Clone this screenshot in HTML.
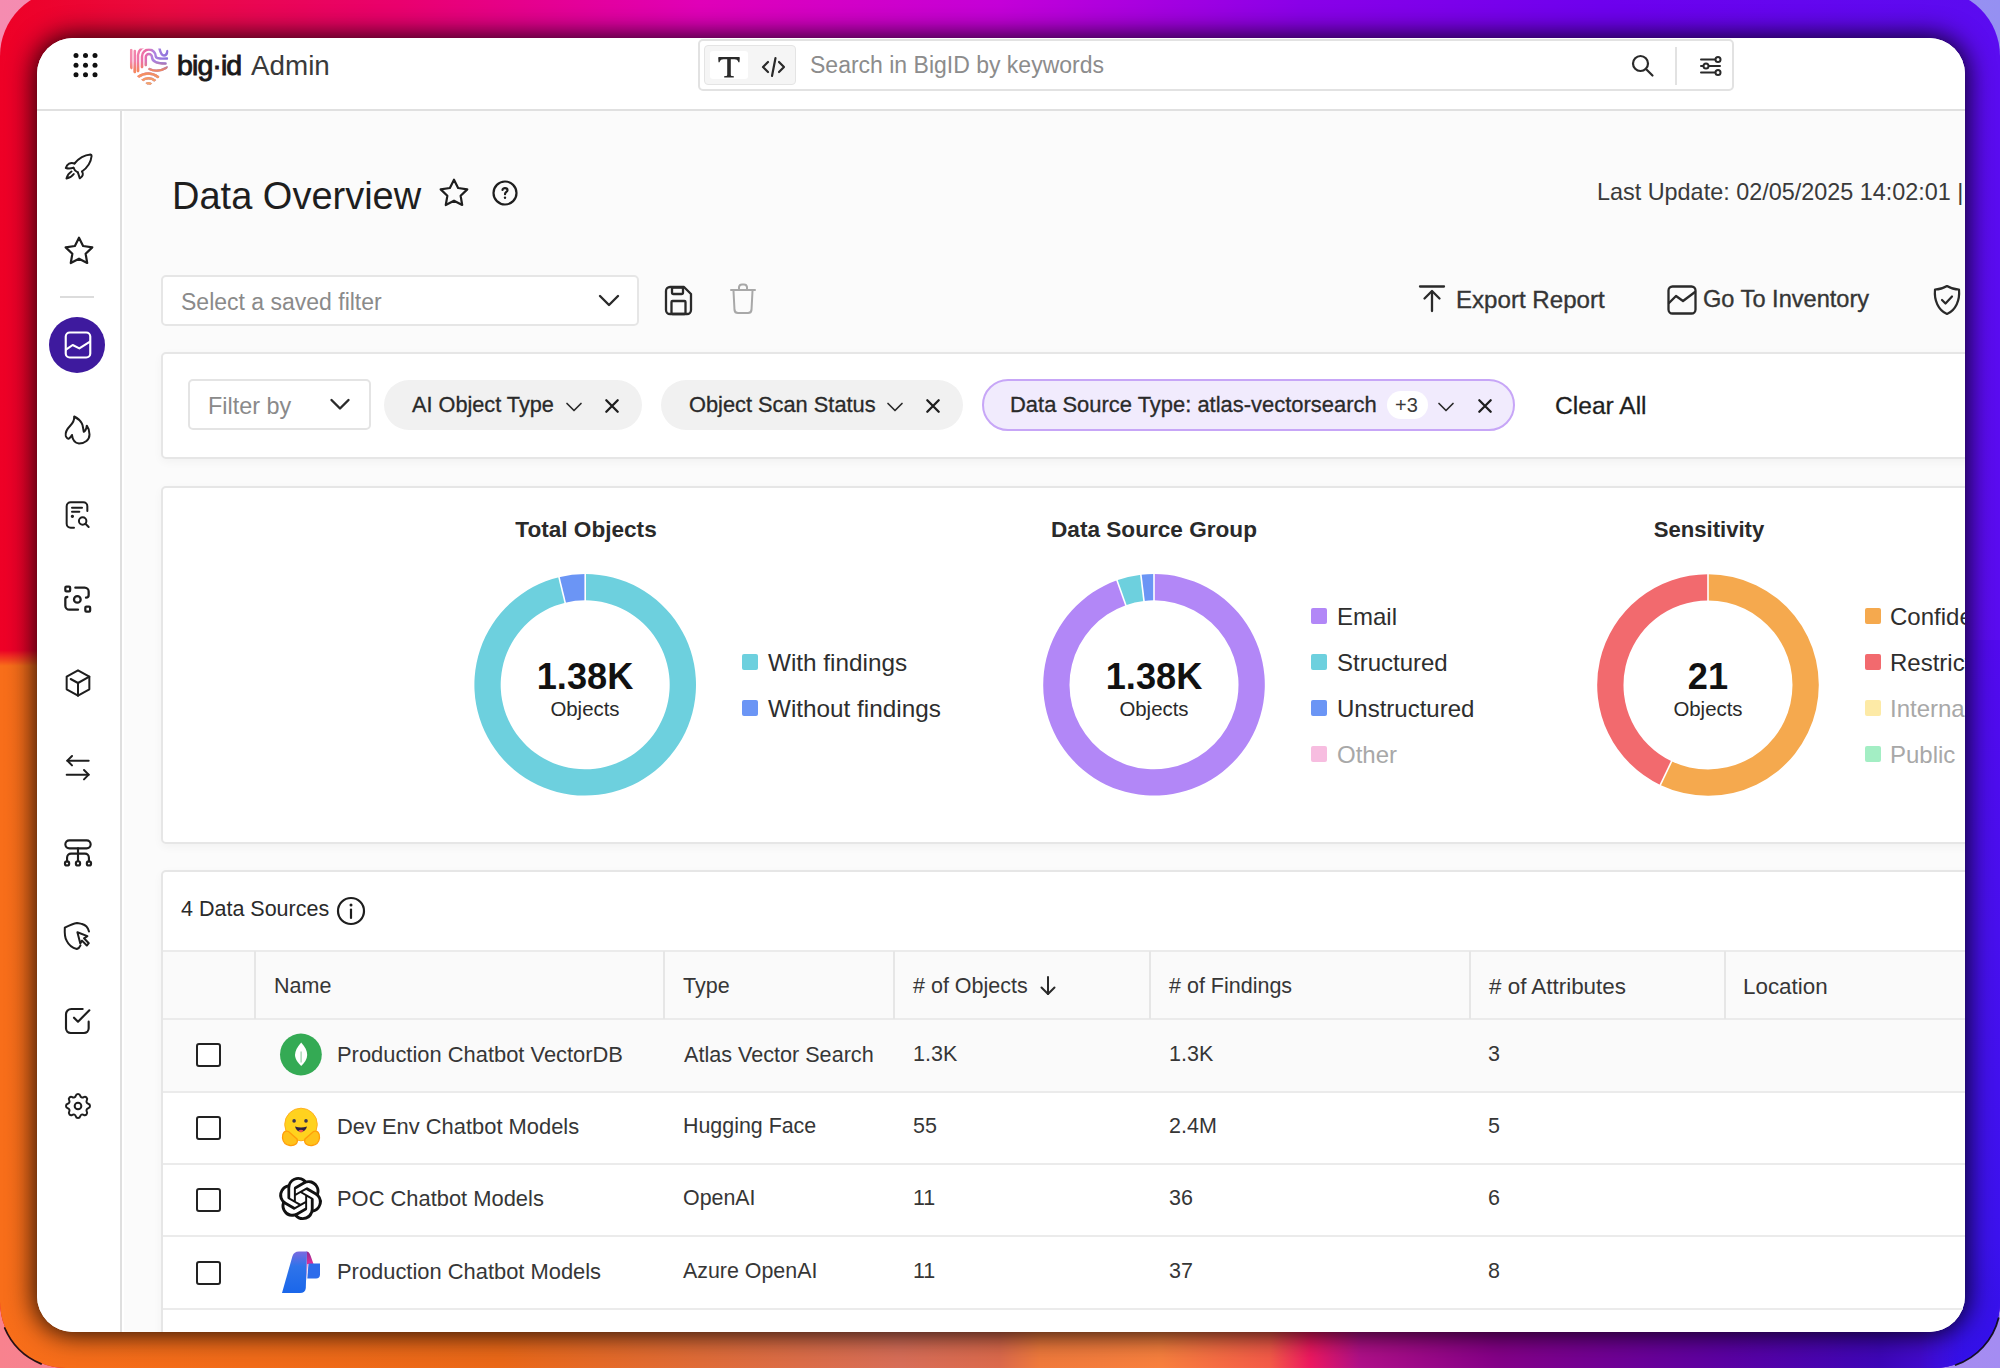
<!DOCTYPE html>
<html><head><meta charset="utf-8">
<style>
*{box-sizing:border-box;margin:0;padding:0}
html,body{width:2000px;height:1368px;overflow:hidden;font-family:"Liberation Sans",sans-serif;color:#222}
body{position:relative;background:linear-gradient(90deg,#f58cb0,#9590f2) top/100% 50% no-repeat,linear-gradient(90deg,#f8828e,#a48cf2) bottom/100% 50% no-repeat}
#frame{position:absolute;left:0;top:-10px;width:2000px;height:1378px;border-radius:66px;overflow:hidden}
#ftop{position:absolute;inset:0;background:linear-gradient(90deg,#ee0026 0%,#ea0a40 8%,#ea006e 20%,#e000b8 35%,#c400d8 50%,#8a00e8 65%,#6e00ee 80%,#5a0cf0 100%)}
#fbot{position:absolute;inset:0;background:linear-gradient(90deg,#f86e1a 0%,#ea6818 25%,#e06c38 35%,#d86e58 45%,#dc6a4c 50%,#f07a3c 52%,#f8803e 58%,#f45a48 63.5%,#ee1860 65.5%,#b01088 68%,#840088 75%,#6000a0 85%,#3e06b8 94%,#4812ee 100%);-webkit-mask-image:linear-gradient(180deg,transparent 0,transparent 660px,#000 676px)}
#fright{position:absolute;left:1920px;top:650px;width:80px;height:768px;background:linear-gradient(180deg,#520aee 0%,#4810ee 38%,#3c12ee 78%,#3010e6 100%);-webkit-mask-image:linear-gradient(90deg,transparent 0,#000 45px)}
#win{position:absolute;left:37px;top:38px;width:1928px;height:1294px;border-radius:36px;background:#fbfbfb;overflow:hidden;box-shadow:0 0 26px 3px rgba(0,0,0,.85)}
#pg{position:absolute;left:-37px;top:-38px;width:2000px;height:1368px}
.a{position:absolute}
.t{position:absolute;white-space:nowrap;line-height:1}
svg.i{position:absolute;overflow:visible}
.card{position:absolute;background:#fff;border:2px solid #e6e6e6;border-radius:5px;box-shadow:0 3px 10px rgba(0,0,0,.04)}
</style></head><body>
<div id="frame"><div id="ftop"></div><div id="fbot"></div><div id="fright"></div></div>
<svg class="i" style="left:0;top:0" width="2000" height="1368" viewBox="0 0 2000 1368"><g fill="none" stroke="#000" stroke-width="1.8" stroke-linecap="round" opacity=".85"><path d="M4.7 1328.0 A66.6 66.6 0 0 0 41.1 1363.8"/><path d="M1998.6 1318.1 A66.6 66.6 0 0 1 1955.7 1365.0"/></g></svg>
<div id="win"><div id="pg">
<!-- HEADER -->
<div class="a" style="left:37px;top:38px;width:1928px;height:73px;background:#fff;border-bottom:2px solid #e0e0e0"></div>
<!-- grid dots -->
<svg class="i" style="left:70px;top:50px" width="32" height="32" viewBox="0 0 32 32">
<g fill="#111"><circle cx="6" cy="5.6" r="2.5"/><circle cx="15.5" cy="5.6" r="2.5"/><circle cx="25" cy="5.6" r="2.5"/><circle cx="6" cy="15.2" r="2.5"/><circle cx="15.5" cy="15.2" r="2.5"/><circle cx="25" cy="15.2" r="2.5"/><circle cx="6" cy="24.8" r="2.5"/><circle cx="15.5" cy="24.8" r="2.5"/><circle cx="25" cy="24.8" r="2.5"/></g></svg>
<!-- logo -->
<svg class="i" style="left:128px;top:46px" width="41" height="41" viewBox="0 0 41 41">
<defs>
<clipPath id="lc"><path d="M1.2 5 Q1 2.5 4 2.5 L37 2.5 Q40.5 2.5 40.5 6 L40 20 Q39 25 35 28.5 L21 40 L7 28.5 Q2 24 1.5 19 Z"/></clipPath>
<linearGradient id="lgA" gradientUnits="userSpaceOnUse" x1="2" y1="6" x2="40" y2="16"><stop offset="0" stop-color="#f590ae"/><stop offset=".4" stop-color="#ec6aa6"/><stop offset=".58" stop-color="#b083e0"/><stop offset="1" stop-color="#8670dc"/></linearGradient>
<linearGradient id="lgO" gradientUnits="userSpaceOnUse" x1="0" y1="15" x2="0" y2="38"><stop offset="0" stop-color="#f5885a" stop-opacity="0"/><stop offset=".42" stop-color="#f5885a" stop-opacity=".95"/><stop offset="1" stop-color="#f7a868"/></linearGradient>
<g id="rid">
<path d="M17.8 19 V11 A3.1 3.1 0 0 1 24 11 C24 14.5 27 17.5 37.5 17.5"/>
<path d="M14 21 V10.5 A6.9 6.9 0 0 1 27.8 10.5 C28 12 30 13 39 12.5"/>
<path d="M10 25 V9 A10 10 0 0 1 20 0"/>
<path d="M31.5 2.5 C32.5 7 34 9.5 36 9.5 C38 9.5 39 8 39.5 5"/>
<path d="M21.5 23 C26 25.5 33 25 39 21.5"/>
<path d="M3.2 22 V4"/><path d="M6.8 26 V5"/>
<path d="M10 31 Q20.5 24 30 31"/><path d="M13.5 35 Q20.5 29.5 27.5 35"/><path d="M17 39 Q20.5 35.5 24 39"/></g>
</defs>
<g clip-path="url(#lc)" fill="none" stroke-width="2.5" stroke-linecap="round">
<use href="#rid" stroke="url(#lgA)"/><use href="#rid" stroke="url(#lgO)"/>
</g></svg>
<div class="t" style="left:177px;top:51px;font-size:28.5px;font-weight:400;letter-spacing:-0.9px;-webkit-text-stroke:0.9px #1a1a1a;color:#1a1a1a">big·id</div>
<div class="t" style="left:251px;top:52px;font-size:27.8px;color:#3a3a3a">Admin</div>
<!-- search -->
<div class="a" style="left:698px;top:39px;width:1036px;height:52px;background:#fff;border:2px solid #e2e2e2;border-radius:5px"></div>
<div class="a" style="left:704px;top:45px;width:92px;height:40px;background:#f5f5f5;border:1.5px solid #e4e4e4;border-radius:4px"></div>
<div class="a" style="left:710px;top:51px;width:38px;height:28px;background:#fff;border-radius:3px"></div>
<svg class="i" style="left:716px;top:54px" width="26" height="26" viewBox="0 0 26 26"><g fill="#2a2a2a"><path d="M3 3 H23 C23.5 3 23.8 3.3 23.8 3.8 L23.5 8 C23.4 8.6 22.6 8.6 22.4 8 C21.6 6 20.5 5.3 18.5 5.3 H14.8 V20.8 C14.8 21.6 15.3 22 16.2 22.1 L17.5 22.3 C18.2 22.4 18.2 23.4 17.5 23.4 H8.5 C7.8 23.4 7.8 22.4 8.5 22.3 L9.8 22.1 C10.7 22 11.2 21.6 11.2 20.8 V5.3 H7.5 C5.5 5.3 4.4 6 3.6 8 C3.4 8.6 2.6 8.6 2.5 8 L2.2 3.8 C2.2 3.3 2.5 3 3 3Z"/></g></svg>
<svg class="i" style="left:760px;top:54px" width="28" height="26" viewBox="0 0 28 26"><g fill="none" stroke="#2a2a2a" stroke-width="2.2" stroke-linecap="round" stroke-linejoin="round"><path d="M8 8 L3 13 L8 18"/><path d="M19 8 L24 13 L19 18"/><path d="M15.5 4 L12 22"/></g></svg>
<div class="t" style="left:810px;top:54px;font-size:23px;color:#8c8c8c">Search in BigID by keywords</div>
<svg class="i" style="left:1630px;top:53px" width="26" height="26" viewBox="0 0 26 26"><g fill="none" stroke="#2a2a2a" stroke-width="2.2" stroke-linecap="round"><circle cx="10.5" cy="10.5" r="7.5"/><path d="M16 16 L22.5 22.5"/></g></svg>
<div class="a" style="left:1675px;top:47px;width:2px;height:38px;background:#e2e2e2"></div>
<svg class="i" style="left:1698px;top:55px" width="26" height="26" viewBox="0 0 26 26"><g fill="none" stroke="#2a2a2a" stroke-width="2" stroke-linecap="round"><path d="M3 4.5 H17"/><circle cx="20" cy="4.5" r="2.5"/><path d="M3 11 H5"/><circle cx="8" cy="11" r="2.5"/><path d="M11 11 H22"/><path d="M3 17.5 H17"/><circle cx="20" cy="17.5" r="2.5"/></g></svg>
<!-- SIDEBAR -->
<div class="a" style="left:37px;top:111px;width:87px;height:1222px;background:#fff"></div><div class="a" style="left:120px;top:111px;width:2px;height:1222px;background:#dfdfdf"></div>
<!-- sidebar icons -->
<svg class="i" style="left:60px;top:150px" width="36" height="36" viewBox="0 0 36 36"><g fill="none" stroke="#1e1e1e" stroke-width="2" stroke-linecap="round" stroke-linejoin="round"><path d="M14.5 13.5 C19 8 24.5 5 30.5 4.5 C31.3 4.6 31.6 5 31.6 6 C31 12 27.5 17.5 22 21.5"/><path d="M14.5 13.5 C10.5 12 7 14 5.8 18 C8.5 18.8 11 18.5 13.5 17.8"/><path d="M22 21.5 C23.5 23.5 23.2 26.5 19.8 28.3 C19 26 18.5 24 17.8 22.3"/><path d="M13.5 17.8 C14 19.5 15.5 21.3 17.8 22.3"/><path d="M11.5 21.5 C9 23 7.3 25.5 6.5 28.5 C9.5 28 12 26.5 13.8 24"/></g></svg>
<svg class="i" style="left:63px;top:235px" width="32" height="32" viewBox="0 0 24 24"><g fill="none" stroke="#1e1e1e" stroke-width="1.65" stroke-linecap="round" stroke-linejoin="round"><path d="M12 17.75l-6.172 3.245l1.179 -6.873l-5 -4.867l6.9 -1l3.086 -6.253l3.086 6.253l6.9 1l-5 4.867l1.179 6.873z"/></g></svg>
<div class="a" style="left:60px;top:296px;width:34px;height:2px;background:#dcdcdc"></div>
<div class="a" style="left:49px;top:317px;width:56px;height:56px;border-radius:50%;background:#3e1a9e"></div>
<svg class="i" style="left:62px;top:329px" width="32" height="32" viewBox="0 0 24 24"><g fill="none" stroke="#fff" stroke-width="1.6" stroke-linecap="round" stroke-linejoin="round"><rect x="2.8" y="2.6" width="18.4" height="18.8" rx="3"/><path d="M3 15.5 L8 12 L13 14.5 L21 9.5"/></g></svg>
<svg class="i" style="left:60px;top:412px" width="36" height="36" viewBox="0 0 36 36"><g fill="none" stroke="#1e1e1e" stroke-width="2" stroke-linecap="round" stroke-linejoin="round"><path d="M14.2 4.5 C14.5 9 13 11 10 14 C6.5 17.5 5 20 5.8 24 C6.5 26 8 27 9 26.5 C10.5 25.5 11.5 24 12 23 C12.5 27.5 15 31 19 31.5 C25 31.5 29.5 28 29.5 22.5 C29.5 19 28.5 16 26.8 13.7 C26.5 16 25.5 19 23.8 19.8 C23 16.5 23 13 21.8 11.3 C20 8 17 6 14.2 4.5Z"/></g></svg>
<svg class="i" style="left:62px;top:499px" width="32" height="32" viewBox="0 0 24 24"><g fill="none" stroke="#1e1e1e" stroke-width="1.5" stroke-linecap="round" stroke-linejoin="round"><path d="M9 21.5H6.5a3 3 0 0 1 -3 -3V5.5a3 3 0 0 1 3 -3H16a3 3 0 0 1 3 3V9"/><path d="M7.5 6.5H15"/><path d="M7.5 9.5H13"/><circle cx="7.8" cy="13" r=".5" fill="#1e1e1e"/><circle cx="15.5" cy="16.5" r="2.8"/><path d="M17.6 18.6L20 21"/></g></svg>
<svg class="i" style="left:62px;top:583px" width="32" height="32" viewBox="0 0 24 24"><g fill="none" stroke="#1e1e1e" stroke-width="1.7" stroke-linecap="round" stroke-linejoin="round"><rect x="2.5" y="2.8" width="3.6" height="3.4" rx=".8"/><rect x="17.5" y="17.8" width="3.6" height="3.6" rx=".8"/><circle cx="11.5" cy="12.3" r="2.5"/><path d="M10 3.5H17a3 3 0 0 1 3 3V9a2 2 0 0 1 -2 2"/><path d="M4 10.5a1.5 1.5 0 0 0 -1.5 1.5V17a3 3 0 0 0 3 3H12"/></g></svg>
<svg class="i" style="left:62px;top:667px" width="32" height="32" viewBox="0 0 24 24"><g fill="none" stroke="#1e1e1e" stroke-width="1.5" stroke-linecap="round" stroke-linejoin="round"><path d="M12 2.5l8.5 4.8v9.4l-8.5 4.8l-8.5 -4.8v-9.4z"/><path d="M12 12l8.5 -4.7"/><path d="M12 12v9.5"/><path d="M12 12l-5.5 -3"/></g></svg>
<svg class="i" style="left:62px;top:752px" width="32" height="32" viewBox="0 0 24 24"><g fill="none" stroke="#1e1e1e" stroke-width="1.5" stroke-linecap="round" stroke-linejoin="round"><path d="M20 6.5H4"/><path d="M7.5 3L4 6.5L7.5 10"/><path d="M3.5 17H20"/><path d="M16.5 13.5L20 17L16.5 20.5"/></g></svg>
<svg class="i" style="left:62px;top:837px" width="32" height="32" viewBox="0 0 24 24"><g fill="none" stroke="#1e1e1e" stroke-width="1.6" stroke-linecap="round" stroke-linejoin="round"><rect x="2.5" y="2.5" width="19" height="6" rx="3"/><path d="M12 8.5V18"/><path d="M3.8 18.5V15.5a3 3 0 0 1 3 -3H17.2a3 3 0 0 1 3 3V18.5"/><circle cx="3.8" cy="19.8" r="1.6"/><circle cx="12" cy="19.8" r="1.6"/><circle cx="20.2" cy="19.8" r="1.6"/></g></svg>
<svg class="i" style="left:60px;top:919px" width="36" height="36" viewBox="0 0 36 36"><g fill="none" stroke="#1e1e1e" stroke-width="2" stroke-linecap="round" stroke-linejoin="round"><path d="M29 12.5 C28 8.5 26 6 22 5 C20 4.5 18.5 4 17 3.9 C13 4.5 9 6.5 4.8 8.7 C4.5 15 5 19 6.6 21.6 C8.5 25.5 12.5 29 16.8 30 C18.5 29.5 19.8 28 20.5 26.3"/><path d="M17.4 13.2 L27.4 17.1 L24 19.3 L28.8 24.2 L26.8 26.5 L22 21.6 L20.3 24.5 Z"/></g></svg>
<svg class="i" style="left:62px;top:1005px" width="32" height="32" viewBox="0 0 24 24"><g fill="none" stroke="#1e1e1e" stroke-width="1.6" stroke-linecap="round" stroke-linejoin="round"><path d="M15.5 3H7a4 4 0 0 0 -4 4V17.5a3.5 3.5 0 0 0 3.5 3.5H16.5a3.5 3.5 0 0 0 3.5 -3.5V12.5"/><path d="M9 9.5L12 12.5L20.5 4"/></g></svg>
<svg class="i" style="left:62px;top:1090px" width="32" height="32" viewBox="0 0 24 24"><g fill="none" stroke="#1e1e1e" stroke-width="1.5" stroke-linecap="round" stroke-linejoin="round"><path d="M10.325 4.317c.426 -1.756 2.924 -1.756 3.35 0a1.724 1.724 0 0 0 2.573 1.066c1.543 -.94 3.31 .826 2.37 2.37a1.724 1.724 0 0 0 1.065 2.572c1.756 .426 1.756 2.924 0 3.35a1.724 1.724 0 0 0 -1.066 2.573c.94 1.543 -.826 3.31 -2.37 2.37a1.724 1.724 0 0 0 -2.572 1.065c-.426 1.756 -2.924 1.756 -3.35 0a1.724 1.724 0 0 0 -2.573 -1.066c-1.543 .94 -3.31 -.826 -2.37 -2.37a1.724 1.724 0 0 0 -1.065 -2.572c-1.756 -.426 -1.756 -2.924 0 -3.35a1.724 1.724 0 0 0 1.066 -2.573c-.94 -1.543 .826 -3.31 2.37 -2.37c1 .608 2.296 .07 2.572 -1.065z"/><circle cx="12" cy="12" r="2.5"/></g></svg>

<!-- TITLE ROW -->
<div class="t" style="left:172px;top:177px;font-size:38px;color:#1e1e1e">Data Overview</div>
<svg class="i" style="left:438px;top:177px" width="32" height="32" viewBox="0 0 24 24"><g fill="none" stroke="#1e1e1e" stroke-width="1.65" stroke-linecap="round" stroke-linejoin="round"><path d="M12 17.75l-6.172 3.245l1.179 -6.873l-5 -4.867l6.9 -1l3.086 -6.253l3.086 6.253l6.9 1l-5 4.867l1.179 6.873z"/></g></svg>
<svg class="i" style="left:491px;top:179px" width="28" height="28" viewBox="0 0 28 28"><g fill="none" stroke="#1e1e1e" stroke-width="2.2" stroke-linecap="round"><circle cx="14" cy="14" r="11.5"/><path d="M11.5 11 C11.5 8.5 16.5 8.5 16.5 11.2 C16.5 13 14 13 14 15.2"/></g><circle cx="14" cy="18.8" r="1.2" fill="#1e1e1e"/></svg>
<div class="t" style="left:1597px;top:181px;font-size:23.4px;color:#3a3a3a">Last Update: 02/05/2025 14:02:01 |</div>

<!-- TOOLBAR -->
<div class="a" style="left:161px;top:275px;width:478px;height:51px;background:#fff;border:2px solid #e6e6e6;border-radius:5px"></div>
<div class="t" style="left:181px;top:291px;font-size:23px;color:#8a8a8a">Select a saved filter</div>
<svg class="i" style="left:597px;top:292px" width="24" height="18" viewBox="0 0 24 18"><path d="M3 4 L12 13 L21 4" fill="none" stroke="#2a2a2a" stroke-width="2.4" stroke-linecap="round" stroke-linejoin="round"/></svg>
<svg class="i" style="left:663px;top:284px" width="32" height="33" viewBox="0 0 32 33"><g fill="none" stroke="#2a2a2a" stroke-width="2.3" stroke-linejoin="round"><path d="M7 3 H21 L28 10 V26 A4 4 0 0 1 24 30 H7 A4 4 0 0 1 3 26 V7 A4 4 0 0 1 7 3z"/><rect x="9" y="3.5" width="11" height="6.5" rx="1.5"/><rect x="8.5" y="17" width="14" height="13" rx="1"/></g></svg>
<svg class="i" style="left:728px;top:282px" width="30" height="34" viewBox="0 0 30 34"><g fill="none" stroke="#a8a8a8" stroke-width="2" stroke-linecap="round" stroke-linejoin="round"><path d="M3 8 H27"/><path d="M11 7 V5 A3 3 0 0 1 14 2.5 H16 A3 3 0 0 1 19 5 V7"/><path d="M5.5 9 L6.5 28 A3.5 3.5 0 0 0 10 31 H20 A3.5 3.5 0 0 0 23.5 28 L24.5 9"/></g></svg>
<svg class="i" style="left:1417px;top:283px" width="30" height="30" viewBox="0 0 30 30"><g fill="none" stroke="#2a2a2a" stroke-width="2.3" stroke-linecap="round" stroke-linejoin="round"><path d="M3 3.5 H27"/><path d="M15 28 V9"/><path d="M7.5 15.5 L15 8 L22.5 15.5"/></g></svg>
<div class="t" style="left:1456px;top:288px;font-size:24.1px;color:#353535;-webkit-text-stroke:0.35px #353535">Export Report</div>
<svg class="i" style="left:1666px;top:284px" width="32" height="32" viewBox="0 0 32 32"><g fill="none" stroke="#2a2a2a" stroke-width="2.3" stroke-linecap="round" stroke-linejoin="round"><rect x="2.5" y="2.5" width="27" height="27" rx="4"/><path d="M3 19 L10 12 L17 17 L29 8"/></g></svg>
<div class="t" style="left:1703px;top:288px;font-size:23.6px;color:#353535;-webkit-text-stroke:0.35px #353535">Go To Inventory</div>
<svg class="i" style="left:1932px;top:284px" width="30" height="32" viewBox="0 0 30 32"><g fill="none" stroke="#2a2a2a" stroke-width="2.2" stroke-linecap="round" stroke-linejoin="round"><path d="M15 2 C19 4.5 23 5.5 27 5.5 C28 16 24 26 15 30 C6 26 2 16 3 5.5 C7 5.5 11 4.5 15 2z"/><path d="M10 16 L13.5 19.5 L20 12.5"/></g></svg>
<!-- FILTER PANEL -->
<div class="card" style="left:161px;top:352px;width:1830px;height:107px"></div>
<div class="a" style="left:188px;top:379px;width:183px;height:51px;background:#fff;border:2px solid #e4e4e4;border-radius:5px"></div>
<div class="t" style="left:208px;top:395px;font-size:23.4px;color:#8a8a8a">Filter by</div>
<svg class="i" style="left:328px;top:396px" width="24" height="18" viewBox="0 0 24 18"><path d="M3.5 4 L12 12.5 L20.5 4" fill="none" stroke="#2a2a2a" stroke-width="2.4" stroke-linecap="round" stroke-linejoin="round"/></svg>

<div class="a" style="left:384px;top:380px;width:258px;height:50px;background:#f1f1f1;border-radius:25px"></div>
<div class="t" style="left:412px;top:394px;font-size:21.7px;color:#2a2a2a;-webkit-text-stroke:0.3px #2a2a2a">AI Object Type</div>
<svg class="i" style="left:565px;top:399.5px" width="18" height="14" viewBox="0 0 18 14"><path d="M2 3.5 L9 10.5 L16 3.5" fill="none" stroke="#2a2a2a" stroke-width="1.7" stroke-linecap="round" stroke-linejoin="round"/></svg>
<svg class="i" style="left:603px;top:397px" width="18" height="18" viewBox="0 0 18 18"><path d="M3.3 3.3 L14.7 14.7 M14.7 3.3 L3.3 14.7" fill="none" stroke="#1e1e1e" stroke-width="2.3" stroke-linecap="round"/></svg>

<div class="a" style="left:661px;top:380px;width:302px;height:50px;background:#f1f1f1;border-radius:25px"></div>
<div class="t" style="left:689px;top:394px;font-size:21.8px;color:#2a2a2a;-webkit-text-stroke:0.3px #2a2a2a">Object Scan Status</div>
<svg class="i" style="left:886px;top:399.5px" width="18" height="14" viewBox="0 0 18 14"><path d="M2 3.5 L9 10.5 L16 3.5" fill="none" stroke="#2a2a2a" stroke-width="1.7" stroke-linecap="round" stroke-linejoin="round"/></svg>
<svg class="i" style="left:924px;top:397px" width="18" height="18" viewBox="0 0 18 18"><path d="M3.3 3.3 L14.7 14.7 M14.7 3.3 L3.3 14.7" fill="none" stroke="#1e1e1e" stroke-width="2.3" stroke-linecap="round"/></svg>

<div class="a" style="left:982px;top:379px;width:533px;height:52px;background:#f1ebfd;border:2px solid #c7a6f7;border-radius:26px"></div>
<div class="t" style="left:1010px;top:394px;font-size:21.95px;color:#2a2a2a;-webkit-text-stroke:0.3px #2a2a2a">Data Source Type: atlas-vectorsearch</div>
<div class="a" style="left:1387px;top:391px;width:41px;height:28px;background:#fff;border-radius:14px"></div>
<div class="t" style="left:1395px;top:395px;font-size:20px;color:#3a3a3a">+3</div>
<svg class="i" style="left:1437px;top:399.5px" width="18" height="14" viewBox="0 0 18 14"><path d="M2 3.5 L9 10.5 L16 3.5" fill="none" stroke="#2a2a2a" stroke-width="1.7" stroke-linecap="round" stroke-linejoin="round"/></svg>
<svg class="i" style="left:1476px;top:397px" width="18" height="18" viewBox="0 0 18 18"><path d="M3.3 3.3 L14.7 14.7 M14.7 3.3 L3.3 14.7" fill="none" stroke="#1e1e1e" stroke-width="2.3" stroke-linecap="round"/></svg>
<div class="t" style="left:1555px;top:394px;font-size:24.6px;color:#1e1e1e;-webkit-text-stroke:0.3px #2a2a2a">Clear All</div>

<!-- CHART CARD -->
<div class="card" style="left:161px;top:486px;width:1830px;height:358px"></div>
<div class="t" style="left:386px;top:519px;width:400px;text-align:center;font-size:22.6px;font-weight:700;color:#2a2a2a">Total Objects</div>
<div class="t" style="left:954px;top:519px;width:400px;text-align:center;font-size:22.6px;font-weight:700;color:#2a2a2a">Data Source Group</div>
<div class="t" style="left:1509px;top:519px;width:400px;text-align:center;font-size:22.1px;font-weight:700;color:#2a2a2a">Sensitivity</div>

<svg class="i" style="left:0;top:0" width="2000" height="1368" viewBox="0 0 2000 1368"><path d="M585.20 574.00 A110.8 110.8 0 1 1 558.96 577.15 L565.19 602.70 A84.5 84.5 0 1 0 585.20 600.30Z" fill="#6dd0de"/>
<path d="M558.96 577.15 A110.8 110.8 0 0 1 585.20 574.00 L585.20 600.30 A84.5 84.5 0 0 0 565.19 602.70Z" fill="#6b95f5"/>
<path d="M585.20 601.30 L585.20 573.00" stroke="#fff" stroke-width="1.6"/>
<path d="M565.42 603.68 L558.72 576.18" stroke="#fff" stroke-width="1.6"/>
<path d="M1154.00 574.00 A110.8 110.8 0 1 1 1117.01 580.36 L1125.79 605.15 A84.5 84.5 0 1 0 1154.00 600.30Z" fill="#b287f7"/>
<path d="M1117.01 580.36 A110.8 110.8 0 0 1 1140.88 574.78 L1143.99 600.89 A84.5 84.5 0 0 0 1125.79 605.15Z" fill="#6dd0de"/>
<path d="M1140.88 574.78 A110.8 110.8 0 0 1 1154.00 574.00 L1154.00 600.30 A84.5 84.5 0 0 0 1143.99 600.89Z" fill="#6b95f5"/>
<path d="M1154.00 601.30 L1154.00 573.00" stroke="#fff" stroke-width="1.6"/>
<path d="M1126.13 606.09 L1116.68 579.41" stroke="#fff" stroke-width="1.6"/>
<path d="M1144.11 601.89 L1140.76 573.79" stroke="#fff" stroke-width="1.6"/>
<path d="M1708.00 574.20 A110.8 110.8 0 1 1 1660.30 785.01 L1671.62 761.27 A84.5 84.5 0 1 0 1708.00 600.50Z" fill="#f5a94e"/>
<path d="M1660.30 785.01 A110.8 110.8 0 0 1 1708.00 574.20 L1708.00 600.50 A84.5 84.5 0 0 0 1671.62 761.27Z" fill="#f26a6e"/>
<path d="M1708.00 601.50 L1708.00 573.20" stroke="#fff" stroke-width="1.6"/>
<path d="M1672.05 760.37 L1659.87 785.91" stroke="#fff" stroke-width="1.6"/>
</svg>

<div class="t" style="left:485px;top:659px;width:200px;text-align:center;font-size:36.2px;font-weight:700;color:#111">1.38K</div>
<div class="t" style="left:485px;top:699px;width:200px;text-align:center;font-size:20.4px;color:#2a2a2a">Objects</div>
<div class="t" style="left:1054px;top:659px;width:200px;text-align:center;font-size:36.2px;font-weight:700;color:#111">1.38K</div>
<div class="t" style="left:1054px;top:699px;width:200px;text-align:center;font-size:20.4px;color:#2a2a2a">Objects</div>
<div class="t" style="left:1608px;top:659px;width:200px;text-align:center;font-size:36.2px;font-weight:700;color:#111">21</div>
<div class="t" style="left:1608px;top:699px;width:200px;text-align:center;font-size:20.4px;color:#2a2a2a">Objects</div>

<div class="a" style="left:742px;top:654px;width:16px;height:16px;border-radius:2px;background:#6dd0de"></div>
<div class="t" style="left:768px;top:651px;font-size:24.3px;color:#2e2e2e">With findings</div>
<div class="a" style="left:742px;top:700px;width:16px;height:16px;border-radius:2px;background:#6b95f5"></div>
<div class="t" style="left:768px;top:697px;font-size:24.3px;color:#2e2e2e">Without findings</div>

<div class="a" style="left:1311px;top:608px;width:16px;height:16px;border-radius:2px;background:#b287f7"></div>
<div class="t" style="left:1337px;top:605px;font-size:24px;color:#2e2e2e">Email</div>
<div class="a" style="left:1311px;top:654px;width:16px;height:16px;border-radius:2px;background:#6dd0de"></div>
<div class="t" style="left:1337px;top:651px;font-size:24px;color:#2e2e2e">Structured</div>
<div class="a" style="left:1311px;top:700px;width:16px;height:16px;border-radius:2px;background:#6b95f5"></div>
<div class="t" style="left:1337px;top:697px;font-size:24px;color:#2e2e2e">Unstructured</div>
<div class="a" style="left:1311px;top:746px;width:16px;height:16px;border-radius:2px;background:#f7bde0"></div>
<div class="t" style="left:1337px;top:743px;font-size:24px;color:#a8a8a8">Other</div>

<div class="a" style="left:1865px;top:608px;width:16px;height:16px;border-radius:2px;background:#f5a94e"></div>
<div class="t" style="left:1890px;top:605px;font-size:24px;color:#2e2e2e">Confidential</div>
<div class="a" style="left:1865px;top:654px;width:16px;height:16px;border-radius:2px;background:#f26a6e"></div>
<div class="t" style="left:1890px;top:651px;font-size:24px;color:#2e2e2e">Restricted</div>
<div class="a" style="left:1865px;top:700px;width:16px;height:16px;border-radius:2px;background:#fdeaa6"></div>
<div class="t" style="left:1890px;top:697px;font-size:24px;color:#a8a8a8">Internal</div>
<div class="a" style="left:1865px;top:746px;width:16px;height:16px;border-radius:2px;background:#a3eec4"></div>
<div class="t" style="left:1890px;top:743px;font-size:24px;color:#a8a8a8">Public</div>
<!-- TABLE CARD -->
<div class="card" style="left:161px;top:870px;width:1830px;height:520px"></div>
<div class="t" style="left:181px;top:899px;font-size:21.5px;color:#2a2a2a">4 Data Sources</div>
<svg class="i" style="left:336px;top:896px" width="30" height="30" viewBox="0 0 30 30"><g fill="none" stroke="#1e1e1e" stroke-width="2.2" stroke-linecap="round"><circle cx="15" cy="15" r="13"/><path d="M15 13.5V22"/></g><circle cx="15" cy="9" r="1.5" fill="#1e1e1e"/></svg>
<div class="a" style="left:163px;top:950px;width:1828px;height:70px;background:#fafafa;border-top:2px solid #ebebeb;border-bottom:2px solid #ebebeb"></div>
<div class="a" style="left:254px;top:951px;width:2px;height:68px;background:#e6e6e6"></div>
<div class="a" style="left:663px;top:951px;width:2px;height:68px;background:#e6e6e6"></div>
<div class="a" style="left:893px;top:951px;width:2px;height:68px;background:#e6e6e6"></div>
<div class="a" style="left:1149px;top:951px;width:2px;height:68px;background:#e6e6e6"></div>
<div class="a" style="left:1469px;top:951px;width:2px;height:68px;background:#e6e6e6"></div>
<div class="a" style="left:1724px;top:951px;width:2px;height:68px;background:#e6e6e6"></div>
<div class="t" style="left:274px;top:976px;font-size:21.5px;color:#363636">Name</div>
<div class="t" style="left:683px;top:976px;font-size:21.5px;color:#363636">Type</div>
<div class="t" style="left:913px;top:976px;font-size:21.5px;color:#363636"># of Objects</div>
<svg class="i" style="left:1037px;top:974px" width="22" height="24" viewBox="0 0 22 24"><g fill="none" stroke="#2a2a2a" stroke-width="2" stroke-linecap="round" stroke-linejoin="round"><path d="M11 3V20"/><path d="M4.5 13.5L11 20L17.5 13.5"/></g></svg>
<div class="t" style="left:1169px;top:976px;font-size:21.5px;color:#363636"># of Findings</div>
<div class="t" style="left:1489px;top:976px;font-size:22.4px;color:#363636"># of Attributes</div>
<div class="t" style="left:1743px;top:976px;font-size:22.4px;color:#363636">Location</div>

<div class="a" style="left:163px;top:1020px;width:1828px;height:71px;background:#fafafa"></div>
<div class="a" style="left:163px;top:1091px;width:1828px;height:2px;background:#ebebeb"></div>
<div class="a" style="left:163px;top:1163px;width:1828px;height:2px;background:#ebebeb"></div>
<div class="a" style="left:163px;top:1235px;width:1828px;height:2px;background:#ebebeb"></div>
<div class="a" style="left:163px;top:1308px;width:1828px;height:2px;background:#ebebeb"></div>

<div class="a" style="left:196px;top:1043px;width:25px;height:24px;border:2.6px solid #222;border-radius:3px;background:#fff"></div>
<div class="a" style="left:196px;top:1116px;width:25px;height:24px;border:2.6px solid #222;border-radius:3px;background:#fff"></div>
<div class="a" style="left:196px;top:1188px;width:25px;height:24px;border:2.6px solid #222;border-radius:3px;background:#fff"></div>
<div class="a" style="left:196px;top:1261px;width:25px;height:24px;border:2.6px solid #222;border-radius:3px;background:#fff"></div>

<!-- mongodb -->
<svg class="i" style="left:280px;top:1034px" width="42" height="42" viewBox="0 0 42 42"><circle cx="20.9" cy="20.5" r="20.9" fill="#34aa54"/><path d="M21.2 8.6 C25 13 27.3 17 27.2 21 C27.1 25 24.5 29 21.2 32 C18 29 15.1 25 15 21 C15 17 17.4 13 21.2 8.6Z" fill="#fff"/><path d="M21.1 17.5 V28.5" stroke="#9fd3ae" stroke-width="1.3"/></svg>
<!-- hugging face -->
<svg class="i" style="left:280px;top:1106px" width="42" height="42" viewBox="0 0 42 42"><circle cx="21" cy="18.5" r="16.3" fill="#ffd21e" stroke="#ffb020" stroke-width="1"/><circle cx="14.1" cy="14.9" r="1.8" fill="#3a3550"/><circle cx="26" cy="14.9" r="1.8" fill="#3a3550"/><path d="M15 20.5 C16.5 27.5 25.5 27.5 27 20.5 C23 21.8 19 21.8 15 20.5Z" fill="#2d2240"/><path d="M18.5 24.5 C20 27 22 27 23.5 24.5 C22 23.5 20 23.5 18.5 24.5Z" fill="#f0564a"/><path d="M2.5 32 C2 27 5 24 8.5 25.5 L17 33 C18.5 37 15 40 10 39.5 C6 39 3 36 2.5 32Z" fill="#ffc21a" stroke="#ff9d0b" stroke-width="1.3"/><path d="M39.5 32 C40 27 37 24 33.5 25.5 L25 33 C23.5 37 27 40 32 39.5 C36 39 39 36 39.5 32Z" fill="#ffc21a" stroke="#ff9d0b" stroke-width="1.3"/></svg>
<!-- openai -->
<svg class="i" style="left:279px;top:1177px" width="43" height="43" viewBox="0 0 24 24"><path fill="#111" d="M22.2819 9.8211a5.9847 5.9847 0 0 0-.5157-4.9108 6.0462 6.0462 0 0 0-6.5098-2.9A6.0651 6.0651 0 0 0 4.9807 4.1818a5.9847 5.9847 0 0 0-3.9977 2.9 6.0462 6.0462 0 0 0 .7427 7.0966 5.98 5.98 0 0 0 .511 4.9107 6.051 6.051 0 0 0 6.5146 2.9001A5.9847 5.9847 0 0 0 13.2599 24a6.0557 6.0557 0 0 0 5.7718-4.2058 5.9894 5.9894 0 0 0 3.9977-2.9001 6.0557 6.0557 0 0 0-.7475-7.0729zm-9.022 12.6081a4.4755 4.4755 0 0 1-2.8764-1.0408l.1419-.0804 4.7783-2.7582a.7948.7948 0 0 0 .3927-.6813v-6.7369l2.02 1.1686a.071.071 0 0 1 .038.052v5.5826a4.504 4.504 0 0 1-4.4945 4.4944zm-9.6607-4.1254a4.4708 4.4708 0 0 1-.5346-3.0137l.142.0852 4.783 2.7582a.7712.7712 0 0 0 .7806 0l5.8428-3.3685v2.3324a.0804.0804 0 0 1-.0332.0615L9.74 19.9502a4.4992 4.4992 0 0 1-6.1408-1.6464zM2.3408 7.8956a4.485 4.485 0 0 1 2.3655-1.9728V11.6a.7664.7664 0 0 0 .3879.6765l5.8144 3.3543-2.0201 1.1685a.0757.0757 0 0 1-.071 0l-4.8303-2.7865A4.504 4.504 0 0 1 2.3408 7.872zm16.5963 3.8558L13.1038 8.364 15.1192 7.2a.0757.0757 0 0 1 .071 0l4.8303 2.7913a4.4944 4.4944 0 0 1-.6765 8.1042v-5.6772a.79.79 0 0 0-.407-.667zm2.0107-3.0231l-.142-.0852-4.7735-2.7818a.7759.7759 0 0 0-.7854 0L9.409 9.2297V6.8974a.0662.0662 0 0 1 .0284-.0615l4.8303-2.7866a4.4992 4.4992 0 0 1 6.6802 4.66zM8.3065 12.863l-2.02-1.1638a.0804.0804 0 0 1-.038-.0567V6.0742a4.4992 4.4992 0 0 1 7.3757-3.4537l-.142.0805L8.704 5.459a.7948.7948 0 0 0-.3927.6813zm1.0976-2.3654l2.602-1.4998 2.6069 1.4998v2.9994l-2.5974 1.4997-2.6067-1.4997Z"/></svg>
<!-- azure openai -->
<svg class="i" style="left:280px;top:1250px" width="42" height="44" viewBox="0 0 42 44"><defs><linearGradient id="az" x1="0" y1="1" x2="0" y2="0"><stop offset="0" stop-color="#1a66ea"/><stop offset=".65" stop-color="#2f74ea"/><stop offset="1" stop-color="#7a6ae0"/></linearGradient><linearGradient id="azp" x1="0" y1="0" x2="0" y2="1"><stop offset="0" stop-color="#8a2a90"/><stop offset=".45" stop-color="#e8309a"/><stop offset="1" stop-color="#7050d0"/></linearGradient></defs>
<path d="M26.5 1.5 C28.5 1.5 29.5 3 30.5 5.5 L33.5 14 L27.5 14 L26.5 31 Z" fill="url(#azp)"/>
<path d="M2 43 L12.5 6 C13.5 3 15.5 1.5 19 1.5 L27 1.5 L25.8 38 C25.5 41.5 23.5 43 20 43 Z" fill="url(#az)"/>
<path d="M28.5 13.5 L40 13.5 L40 24.5 C40 27 38.5 28.5 36 28.5 L27.3 28.5 Z" fill="#2d6ceb"/></svg>

<div class="t" style="left:337px;top:1044px;font-size:21.9px;color:#363636">Production Chatbot VectorDB</div>
<div class="t" style="left:684px;top:1044px;font-size:21.6px;color:#363636">Atlas Vector Search</div>
<div class="t" style="left:913px;top:1044px;font-size:21.5px;color:#363636">1.3K</div>
<div class="t" style="left:1169px;top:1044px;font-size:21.5px;color:#363636">1.3K</div>
<div class="t" style="left:1488px;top:1044px;font-size:21.5px;color:#363636">3</div>

<div class="t" style="left:337px;top:1116px;font-size:21.9px;color:#363636">Dev Env Chatbot Models</div>
<div class="t" style="left:683px;top:1116px;font-size:21.4px;color:#363636">Hugging Face</div>
<div class="t" style="left:913px;top:1116px;font-size:21.5px;color:#363636">55</div>
<div class="t" style="left:1169px;top:1116px;font-size:21.5px;color:#363636">2.4M</div>
<div class="t" style="left:1488px;top:1116px;font-size:21.5px;color:#363636">5</div>

<div class="t" style="left:337px;top:1188px;font-size:21.9px;color:#363636">POC Chatbot Models</div>
<div class="t" style="left:683px;top:1188px;font-size:21.4px;color:#363636">OpenAI</div>
<div class="t" style="left:913px;top:1188px;font-size:21.5px;color:#363636">11</div>
<div class="t" style="left:1169px;top:1188px;font-size:21.5px;color:#363636">36</div>
<div class="t" style="left:1488px;top:1188px;font-size:21.5px;color:#363636">6</div>

<div class="t" style="left:337px;top:1261px;font-size:21.9px;color:#363636">Production Chatbot Models</div>
<div class="t" style="left:683px;top:1261px;font-size:21.4px;color:#363636">Azure OpenAI</div>
<div class="t" style="left:913px;top:1261px;font-size:21.5px;color:#363636">11</div>
<div class="t" style="left:1169px;top:1261px;font-size:21.5px;color:#363636">37</div>
<div class="t" style="left:1488px;top:1261px;font-size:21.5px;color:#363636">8</div>
</div></div>
</body></html>
